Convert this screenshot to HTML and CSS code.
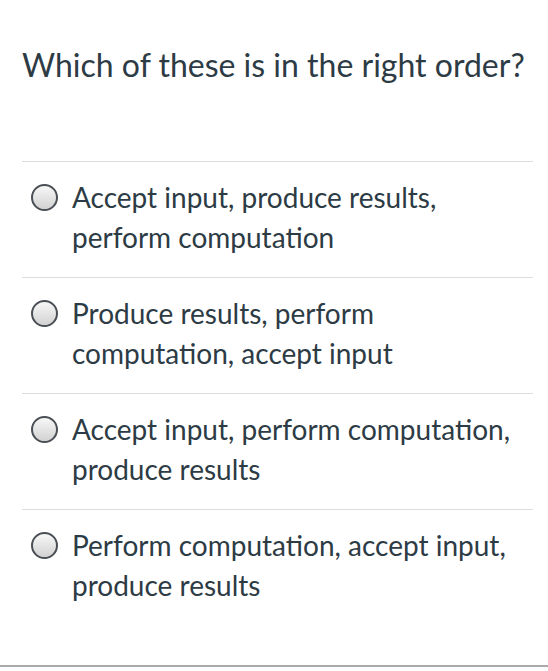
FILE: index.html
```html
<!DOCTYPE html>
<html>
<head>
<meta charset="utf-8">
<link rel="stylesheet" href="styles.css">
</head>
<body>
<div class="page">
  <div class="question">
    <h1 class="prompt">Which of these is in the right order?</h1>
    <div class="answers">
      <label class="answer"><span class="radio"></span><span class="text">Accept input, produce results, perform computation</span></label>
      <label class="answer"><span class="radio"></span><span class="text">Produce results, perform computation, accept input</span></label>
      <label class="answer"><span class="radio"></span><span class="text">Accept input, perform computation, produce results</span></label>
      <label class="answer"><span class="radio"></span><span class="text">Perform computation, accept input, produce results</span></label>
    </div>
  </div>
  <div class="bottom-rule"></div>
</div>
</body>
</html>
```
FILE: styles.css
```css
* { box-sizing: border-box; }
html, body { margin: 0; padding: 0; background: #fff; }
body {
  font-family: Lato, "Open Sans", sans-serif;
  color: #2d3b45;
}
.page {
  width: 548px;
  height: 671px;
  display: flex;
  flex-direction: column;
}
.question {
  flex: 1;
  padding: 0 15px 0 22px;
}
.prompt {
  margin: 0;
  padding-top: 43px;
  height: 161px;
  font-size: 32px;
  font-weight: 400;
  line-height: 44px;
}
.answers {
  display: flex;
  flex-direction: column;
}
.answer {
  display: flex;
  align-items: flex-start;
  gap: 14px;
  border-top: 1px solid #dadcde;
  height: 116px;
  padding-top: 15px;
  padding-left: 9px;
  font-size: 28px;
  line-height: 40px;
}
.radio {
  flex: none;
  width: 27px;
  height: 27px;
  margin-top: 7px;
  border-radius: 50%;
  border: 2px solid #4a4f55;
  background: linear-gradient(#f7f7f7, #d2d2d2);
}
.text { max-width: 455px; }
.bottom-rule {
  height: 2px;
  background: #a9a9a9;
  margin-bottom: 4px;
}
```
